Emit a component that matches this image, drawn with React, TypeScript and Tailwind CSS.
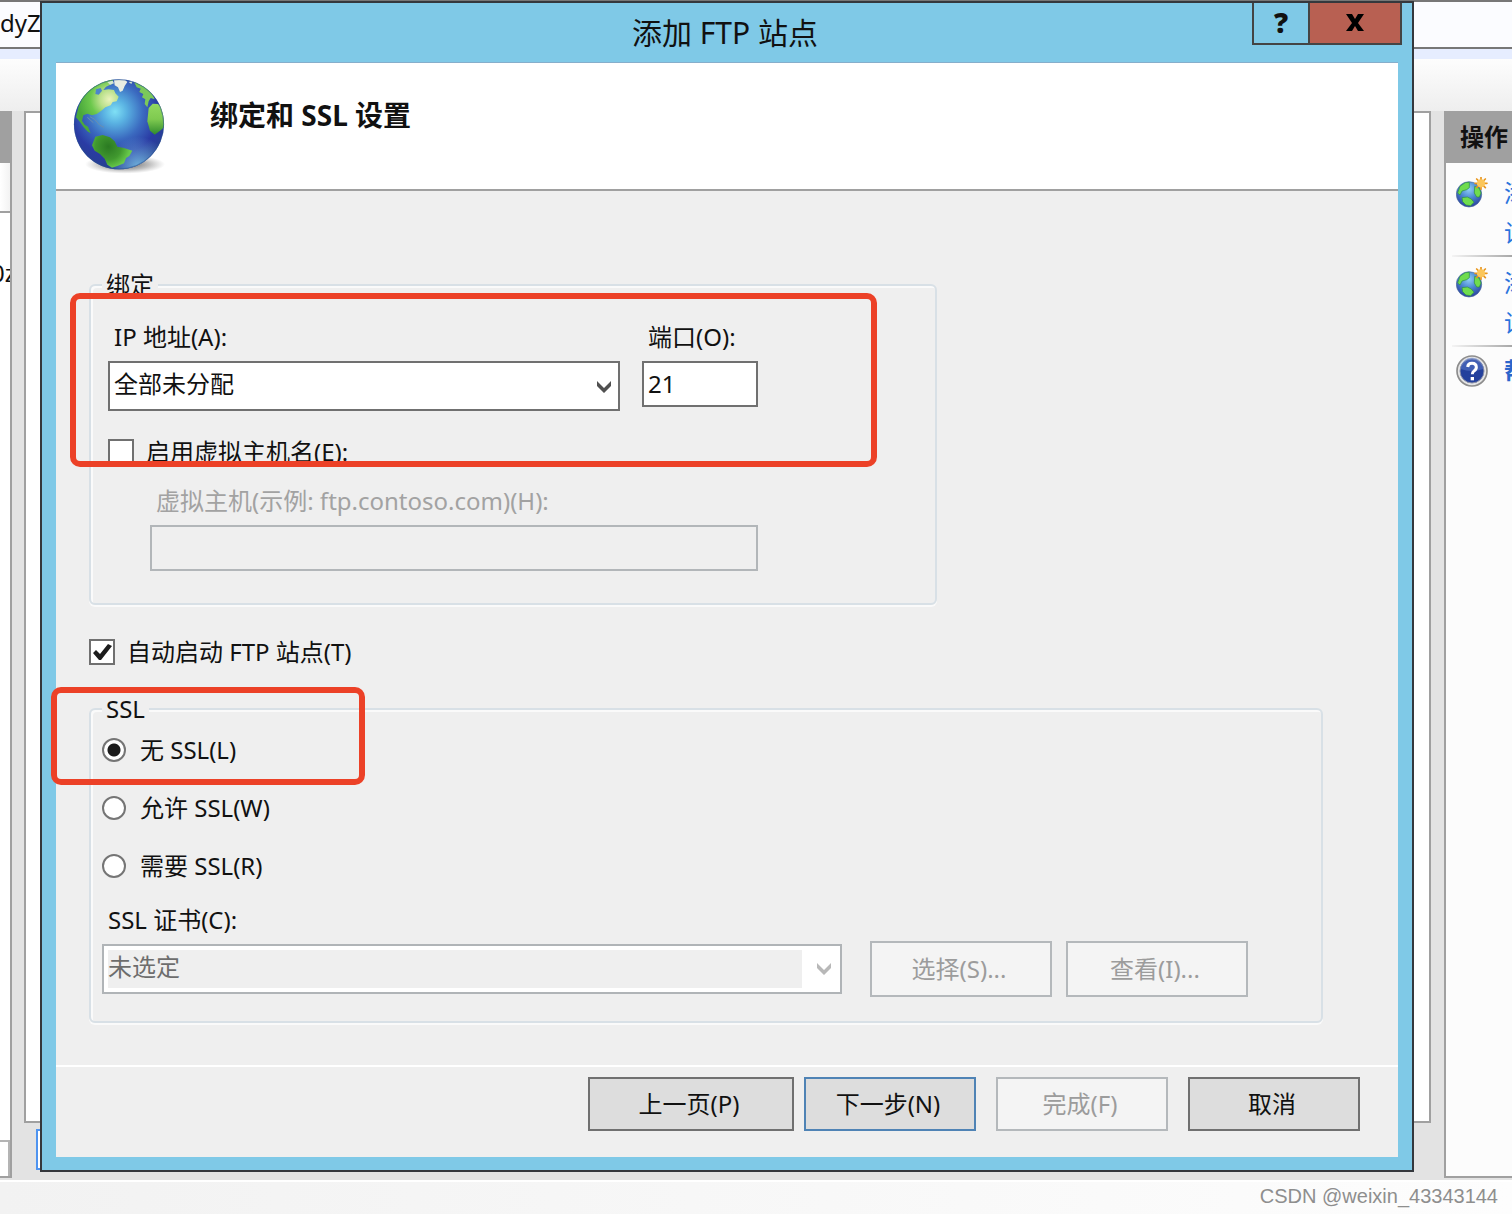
import type { ReactNode } from "react";

const bodyFont = "font-['Noto_Sans','Noto_Sans_CJK_SC',sans-serif]";

function Globe() {
  return (
    <svg viewBox="210 225 300 300" className="size-[100px] shrink-0" aria-hidden="true">
      <defs>
        <radialGradient id="sea" gradientUnits="userSpaceOnUse" cx="345" cy="335" r="175">
          <stop offset="0" stopColor="#7fe0f5" />
          <stop offset="0.2" stopColor="#5ab2e2" />
          <stop offset="0.48" stopColor="#3b6bc0" />
          <stop offset="0.75" stopColor="#2a3ba4" />
          <stop offset="1" stopColor="#27408f" />
        </radialGradient>
        <radialGradient id="rim" gradientUnits="userSpaceOnUse" cx="415" cy="500" r="90">
          <stop offset="0" stopColor="#7cc4ea" stopOpacity="0.85" />
          <stop offset="1" stopColor="#7cc4ea" stopOpacity="0" />
        </radialGradient>
        <radialGradient id="north" gradientUnits="userSpaceOnUse" cx="328" cy="298" r="95">
          <stop offset="0" stopColor="#eaf3bc" />
          <stop offset="0.3" stopColor="#b9e08a" />
          <stop offset="0.6" stopColor="#6cc84c" />
          <stop offset="1" stopColor="#4aa83c" />
        </radialGradient>
        <radialGradient id="south" gradientUnits="userSpaceOnUse" cx="325" cy="440" r="65">
          <stop offset="0" stopColor="#2b7a22" />
          <stop offset="0.6" stopColor="#41992f" />
          <stop offset="1" stopColor="#68c94a" />
        </radialGradient>
        <linearGradient id="africa" x1="0" y1="0" x2="0" y2="1">
          <stop offset="0" stopColor="#92d95f" />
          <stop offset="0.5" stopColor="#7fca50" />
          <stop offset="1" stopColor="#2f8a2c" />
        </linearGradient>
        <radialGradient id="cast">
          <stop offset="0" stopColor="#222" stopOpacity="0.75" />
          <stop offset="0.6" stopColor="#444" stopOpacity="0.35" />
          <stop offset="1" stopColor="#666" stopOpacity="0" />
        </radialGradient>
        <clipPath id="disc">
          <circle cx="357" cy="373" r="135" />
        </clipPath>
      </defs>
      <ellipse cx="375" cy="493" rx="120" ry="28" fill="url(#cast)" />
      <circle cx="357" cy="373" r="135" fill="url(#sea)" />
      <g clipPath="url(#disc)">
        <circle cx="357" cy="373" r="135" fill="url(#rim)" />
        <path
          fill="url(#north)"
          d="M228 352 236 318 250 284 280 258 310 244 340 238 336 252 318 260 310 270 326 268 342 270 346 280 356 290 350 304 338 306 332 316 316 322 304 332 290 342 276 346 262 341 250 346 246 362 254 374 264 380 272 400 262 394 250 380 240 366Z"
        />
        <path fill="#4c86cc" d="M288 268 302 264 306 272 296 284 286 282Z" />
        <path fill="#e8ede2" d="M342 240 372 237 382 246 374 258 368 272 360 276 354 262 344 256Z" />
        <path fill="#d5e6d0" d="M322 246 338 242 342 250 330 254ZM386 246 398 244 394 252Z" />
        <path
          fill="#7bc95a"
          d="M402 246 418 250 440 262 458 284 464 298 452 294 446 304 442 322 434 312 436 298 426 292 430 282 418 276 422 266 410 262Z"
        />
        <path fill="url(#africa)" d="M446 324 458 311 474 312 486 322 496 350 495 380 480 392 464 404 450 392 442 364Z" />
        <path
          fill="url(#south)"
          d="M286 410 308 405 330 412 344 424 352 440 372 444 397 452 388 468 378 474 372 490 352 498 336 503 322 494 314 476 300 462 284 452 276 436Z"
        />
        <path d="M270 350 284 358 300 376 312 382M262 352 280 368" fill="none" stroke="#6b8fae" strokeWidth="3" />
      </g>
      <circle cx="357" cy="373" r="134" fill="none" stroke="#24508e" strokeOpacity="0.5" strokeWidth="3" />
    </svg>
  );
}

function SiteIcon() {
  return (
    <svg viewBox="0 0 96 96" className="size-8 shrink-0" aria-hidden="true">
      <defs>
        <radialGradient id="site-sea" cx="0.5" cy="0.3" r="0.7">
          <stop offset="0" stopColor="#8fd0f4" />
          <stop offset="0.5" stopColor="#4b86d2" />
          <stop offset="1" stopColor="#2a3f9e" />
        </radialGradient>
      </defs>
      <circle cx="39" cy="52" r="38" fill="url(#site-sea)" stroke="#4a6a9a" strokeWidth="2" />
      <path fill="#6fdc4e" stroke="#2f8f3a" strokeWidth="2" d="M5 48 12 28 28 17 40 16 40 32 32 38 18 42 12 54Z" />
      <path fill="#6fdc4e" stroke="#2f8f3a" strokeWidth="2" d="M56 28 70 34 75 48 70 60 62 60 55 48Z" />
      <path fill="#6fdc4e" stroke="#2f8f3a" strokeWidth="2" d="M18 62 34 60 46 66 54 76 44 86 30 84 20 74Z" />
      <path
        stroke="#e8951c"
        strokeWidth="5"
        strokeLinecap="round"
        d="M75 1V37M57 19H93M62 6 88 32M88 6 62 32"
      />
      <circle cx="75" cy="19" r="12" fill="#fbc65a" />
    </svg>
  );
}

function HelpIcon() {
  return (
    <svg viewBox="0 0 96 96" className="size-8 shrink-0" aria-hidden="true">
      <circle cx="48" cy="48" r="45" fill="#e4e4e4" stroke="#8c8c8c" strokeWidth="5" />
      <circle cx="48" cy="48" r="36" fill="#23409c" stroke="#8a8fa6" strokeWidth="3" />
      <path d="M14 42A34 34 0 0 1 82 42Q48 54 14 42Z" fill="#5b78c8" opacity="0.55" />
      <path d="M35 36Q36 25 48 25 61 25 61 37 61 44 54 48 49 51 49 58" fill="none" stroke="#fff" strokeWidth="9" />
      <rect x="44" y="66" width="10" height="10" fill="#fff" />
    </svg>
  );
}

function Chevron({ className }: { className: string }) {
  return (
    <svg viewBox="0 0 16 14" className={className} aria-hidden="true">
      <path d="M1 1 8 8 15 1V6L8 13 1 6Z" fill="currentColor" />
    </svg>
  );
}

function Group({ title, className, children }: { title: string; className: string; children: ReactNode }) {
  return (
    <fieldset
      className={`rounded-md border-2 border-[#d8e0e6] pl-[11px] shadow-[inset_2px_2px_0_#fafafa,0_2px_0_#fafafa] ${className}`}
    >
      <legend className="bg-[#efefef] px-1">{title}</legend>
      {children}
    </fieldset>
  );
}

function CheckRow({ label, checked }: { label: string; checked?: boolean }) {
  return (
    <label className="flex items-center gap-3">
      <span className="relative flex size-[26px]">
        <input
          type="checkbox"
          defaultChecked={checked}
          className="peer size-[26px] appearance-none border-2 border-[#707070] bg-white"
        />
        <svg
          viewBox="0 0 26 26"
          className="pointer-events-none absolute inset-0 hidden size-[26px] peer-checked:block"
          aria-hidden="true"
        >
          <path d="M4 14 7 11 11 15 19 5 23 7 12 21H10Z" fill="#1c1c1c" />
        </svg>
      </span>
      {label}
    </label>
  );
}

function RadioRow({ label, checked }: { label: string; checked?: boolean }) {
  return (
    <label className="flex items-center gap-3.5">
      <span className="flex size-6">
        <input
          type="radio"
          name="ssl"
          defaultChecked={checked}
          className="size-6 appearance-none rounded-full border-2 border-[#757575] bg-white checked:bg-[radial-gradient(circle,#1c1c1c_6px,white_7px)]"
        />
      </span>
      {label}
    </label>
  );
}

type PushButtonProps = { children: ReactNode; className: string; disabled?: boolean; primary?: boolean };

function PushButton({ children, className, disabled, primary }: PushButtonProps) {
  return (
    <button
      type="button"
      disabled={disabled}
      className={`border-2 bg-[#dddddd] pr-1 disabled:border-[#b4b8bb] disabled:bg-[#f4f4f4] disabled:text-[#9c9c9c] ${
        primary ? "border-[#4f83b5]" : "border-[#707070]"
      } ${className}`}
    >
      {children}
    </button>
  );
}

function ManagerWindow() {
  return (
    <div className="col-start-1 row-start-1 flex min-w-0 flex-col overflow-hidden">
      <div className="flex h-[49px] items-center border-t-2 border-b-2 border-[#777777] bg-[#fbfcff] pb-1">dyZ</div>
      <div className="h-2.5 bg-[#e6edff]" />
      <div className="h-[52px] bg-linear-to-b from-[#fdfdfd] to-[#eeeeee]" />
      <div className="flex flex-1 justify-between bg-[#e3e3e3] pb-0.5">
        <div className="flex w-3 flex-col overflow-hidden border-r-2 border-b-2 border-[#a0a0a0] bg-white">
          <div className="h-[52px] bg-[#a0a0a0]" />
          <div className="h-[50px] border-b-2 border-[#a0a0a0] bg-linear-to-r from-white to-[#f3f3f3]" />
          <div className="flex flex-1 flex-col justify-between pt-11">
            <div className="flex justify-end">
              <span className="-mr-1.5">0z</span>
            </div>
            <div className="h-[36px] border-t-2 border-r-2 border-[#b4b4b4]" />
          </div>
        </div>
        <div className="ml-3 flex flex-1 flex-col">
          <div className="flex-1 border-2 border-[#a0a0a0] bg-white" />
          <div className="mt-1.5 mb-2 ml-3 h-[41px] w-40 border-2 border-[#4f94f0] bg-white" />
        </div>
        <aside className="ml-[13px] flex w-[68px] flex-col overflow-hidden border-b-2 border-l-2 border-[#a0a0a0] bg-[#fcfcfc]">
          <h2 className="mb-1 flex h-[52px] items-center bg-[#a0a0a0] pl-3.5 font-semibold whitespace-nowrap">操作</h2>
          {["添加网站", "添加 FTP 站点"].map((name) => (
            <div key={name}>
              <a href="#site" aria-label={name} className="flex h-[88px] gap-4 pt-2.5 pl-2.5 text-[#2b74dc]">
                <SiteIcon />
                <span className="flex flex-col gap-2">
                  <span>添</span>
                  <span>设</span>
                </span>
              </a>
              <div className="ml-1.5 h-0.5 bg-linear-to-r from-[#f4f4f4] to-[#a8a8a8]" />
            </div>
          ))}
          <a href="#help" className="flex items-center gap-4 pt-2 pl-2.5 font-semibold text-[#2b66cc]">
            <HelpIcon />
            <span>帮</span>
          </a>
        </aside>
      </div>
      <footer className="flex h-[34px] justify-end border-t-2 border-white bg-linear-to-r from-[#f2f2f2] to-[#fdfdfd] pr-3.5 font-['Liberation_Sans',sans-serif] text-xl leading-7 text-[#8e8e8e]">
        CSDN @weixin_43343144
      </footer>
    </div>
  );
}

function FtpDialog() {
  return (
    <div
      role="dialog"
      aria-labelledby="dialog-title"
      className="relative col-start-1 row-start-1 mt-px mr-[98px] ml-10 min-w-0 self-start border-2 border-[#35383d] bg-[#7fc9e7] px-3.5 pb-[13px]"
    >
      <div className="flex h-[60px] items-center justify-center border-b border-[#86aecb]">
        <h1 id="dialog-title" className="pr-1 text-[30px] leading-9">
          添加 FTP 站点
        </h1>
        <div className="absolute top-0 right-2.5 flex h-[42px] border-2 border-t-0 border-[#444444] font-['Noto_Sans',sans-serif] text-[28px] font-black">
          <button type="button" aria-label="帮助" className="w-[56px] border-r-2 border-[#444444] pb-0.5">
            ?
          </button>
          <button type="button" aria-label="关闭" className="flex w-[90px] items-center justify-center bg-[#b86052]">
            <svg viewBox="0 0 20 18" className="h-[18px] w-5" aria-hidden="true">
              <path d="M1 0H7L10 5 13 0H19L13 9 19 17H13L10 12 7 17H1L7 9Z" fill="#000" />
            </svg>
          </button>
        </div>
      </div>

      <div className="bg-[#efefef]">
        <header className="flex h-32 gap-10 border-b-2 border-[#a0a0a0] bg-white pt-3 pl-3.5">
          <Globe />
          <h2 className="pt-5 text-[28px] leading-10 font-bold">绑定和 SSL 设置</h2>
        </header>

        <div className="flex flex-col items-start pt-[78px] pr-[75px] pb-[42px] pl-[33px]">
          <Group title="绑定" className="w-full max-w-[848px] pb-8">
            <div className="flex flex-col pt-5 pl-1.5">
              <div className="flex items-start gap-[22px]">
                <div className="flex w-[512px] flex-col gap-2">
                  <label htmlFor="ip" className="pl-1.5">
                    IP 地址(A):
                  </label>
                  <div className="relative">
                    <select
                      id="ip"
                      className="block h-[50px] w-full appearance-none border-2 border-[#707070] bg-white pb-1 pl-1"
                    >
                      <option>全部未分配</option>
                    </select>
                    <Chevron className="pointer-events-none absolute top-[19px] right-2 h-3.5 w-4 text-[#505050]" />
                  </div>
                </div>
                <div className="flex w-[116px] flex-col gap-2">
                  <label htmlFor="port" className="pl-1.5">
                    端口(O):
                  </label>
                  <input
                    id="port"
                    defaultValue="21"
                    className="h-[46px] border-2 border-[#707070] bg-white pb-0.5 pl-1"
                  />
                </div>
              </div>
              <div className="pt-[25px]">
                <CheckRow label="启用虚拟主机名(E):" />
              </div>
              <div className="flex w-[650px] flex-col gap-2 pt-[17px] pl-[42px] text-[#a2a2a2]">
                <label htmlFor="host" className="pl-1.5">
                  虚拟主机(示例: ftp.contoso.com)(H):
                </label>
                <input id="host" disabled className="h-[46px] border-2 border-[#b2b6b9]" />
              </div>
            </div>
          </Group>

          <div className="pt-[31px] pb-[25px]">
            <CheckRow label="自动启动 FTP 站点(T)" checked />
          </div>

          <Group title="SSL" className="w-full pb-6">
            <div className="flex flex-col gap-[26px] pt-[9px]">
              <RadioRow label="无 SSL(L)" checked />
              <RadioRow label="允许 SSL(W)" />
              <RadioRow label="需要 SSL(R)" />
            </div>
            <label htmlFor="cert" className="block pt-[22px] pb-[5px] pl-1.5">
              SSL 证书(C):
            </label>
            <div className="flex items-center">
              <div className="flex h-[50px] w-[740px] items-center border-2 border-[#b0b4b7] bg-white py-1 pr-2 pl-1">
                <select
                  id="cert"
                  disabled
                  className="mr-3.5 h-[38px] flex-1 appearance-none bg-[#efefef] pb-1 text-[#6d6d6d] opacity-100"
                >
                  <option>未选定</option>
                </select>
                <Chevron className="h-3.5 w-4 text-[#b8b8b8]" />
              </div>
              <PushButton disabled className="ml-7 h-14 w-[182px]">
                选择(S)...
              </PushButton>
              <PushButton disabled className="ml-3.5 h-14 w-[182px]">
                查看(I)...
              </PushButton>
            </div>
          </Group>
        </div>

        <div className="flex justify-end gap-5 border-t-2 border-white pt-2.5 pr-[38px] pb-[26px]">
          <div className="flex gap-2.5">
            <PushButton className="h-[54px] w-[206px]">上一页(P)</PushButton>
            <PushButton primary className="h-[54px] w-[172px]">
              下一步(N)
            </PushButton>
          </div>
          <PushButton disabled className="h-[54px] w-[172px]">
            完成(F)
          </PushButton>
          <PushButton className="h-[54px] w-[172px]">取消</PushButton>
        </div>
      </div>

      <div className="pointer-events-none absolute top-[290px] left-7 h-[174px] w-[807px] rounded-[10px] border-6 border-[#ec4127]" />
      <div className="pointer-events-none absolute top-[684px] left-[9px] h-[98px] w-[314px] rounded-[10px] border-6 border-[#ec4127]" />
    </div>
  );
}

export default function App() {
  return (
    <main
      lang="zh-CN"
      className={`grid min-h-screen grid-cols-1 overflow-hidden bg-white text-2xl leading-8 text-[#111111] ${bodyFont}`}
    >
      <ManagerWindow />
      <FtpDialog />
    </main>
  );
}
